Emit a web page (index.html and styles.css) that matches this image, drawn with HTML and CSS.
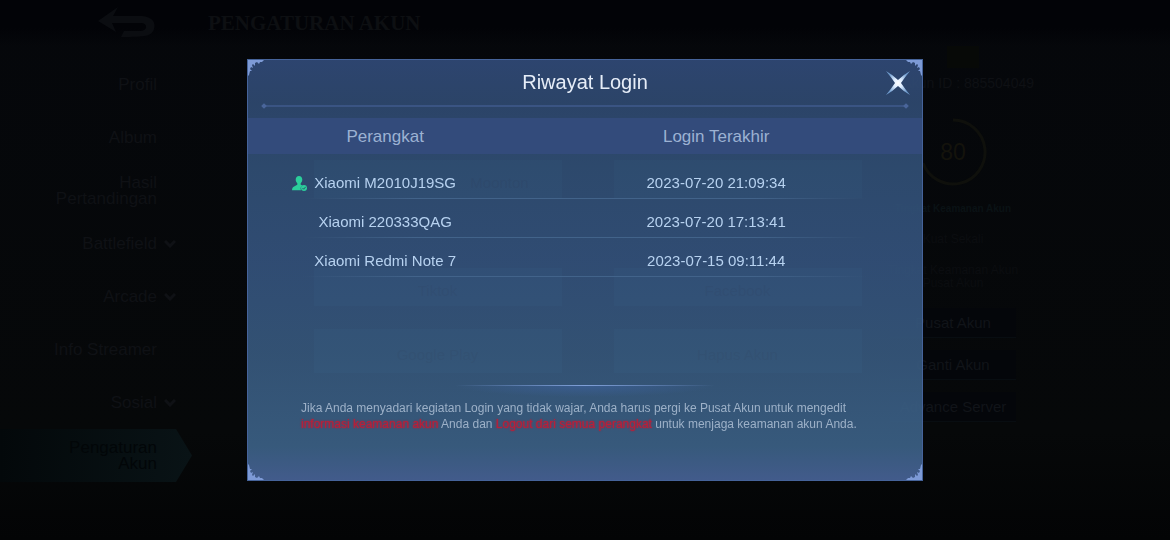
FILE: index.html
```html
<!DOCTYPE html>
<html lang="id">

<head>
    <meta charset="UTF-8">
    <meta name="viewport" content="width=device-width, initial-scale=1.0">
    <title>Pengaturan Akun</title>
    <link rel="stylesheet" href="styles.css">
</head>

<body>
    <!-- Header -->
    <header class="topbar">
        <button type="button" class="back" aria-label="Kembali">
            <svg width="58" height="32" viewBox="0 0 58 32">
                <path d="M0 14 L20 0 L15 9 H44 C54 10 58 15 56 22 C54 29 48 30 23 30 L26 24 H42 C50 24 50 16 43 16 H14 L18 25 Z" />
            </svg>
        </button>
        <h1>PENGATURAN AKUN</h1>
    </header>

    <div class="layout">
        <!-- Menu samping -->
        <nav class="sidebar">
            <a href="#">Profil</a>
            <a href="#">Album</a>
            <a href="#">Hasil<br>Pertandingan</a>
            <a href="#" class="has-sub">Battlefield <svg class="chevron" viewBox="0 0 12 8"><path d="M1 1l5 5 5-5" /></svg></a>
            <a href="#" class="has-sub">Arcade <svg class="chevron" viewBox="0 0 12 8"><path d="M1 1l5 5 5-5" /></svg></a>
            <a href="#">Info Streamer</a>
            <a href="#" class="has-sub">Sosial <svg class="chevron" viewBox="0 0 12 8"><path d="M1 1l5 5 5-5" /></svg></a>
            <a href="#" class="active">Pengaturan<br>Akun</a>
        </nav>

        <!-- Akun terhubung -->
        <main class="accounts">
            <button type="button" class="linked">Moonton</button>
            <button type="button" aria-label="VK"></button>
            <button type="button">Tiktok</button>
            <button type="button">Facebook</button>
            <button type="button" class="tall">Google Play</button>
            <button type="button" class="tall">Hapus Akun</button>
        </main>

        <!-- Panel keamanan -->
        <aside class="security">
            <div class="badge"></div>
            <p class="account-id">Akun ID : 885504049</p>
            <div class="score">
                <svg viewBox="0 0 68 68"><path d="M34 2 A32 32 0 1 1 4 45" /></svg>
                <span>80</span>
            </div>
            <p class="level">Tingkat Keamanan Akun</p>
            <p class="hint">Kuat Sekali</p>
            <p class="hint">Tingkat Keamanan Akun<br>Pusat Akun</p>
            <div class="security-actions">
                <button type="button">Pusat Akun</button>
                <button type="button">Ganti Akun</button>
                <button type="button">Advance Server</button>
            </div>
        </aside>
    </div>

    <!-- Modal riwayat login -->
    <div class="overlay">
        <section class="modal" role="dialog" aria-labelledby="modalTitle">
            <svg class="corner top-left" viewBox="0 0 16 16"><path d="M0 0H16L14 2 12 2 11 4 9 2 7 3 7 6 5 4 4 5 5 8 3 7 2 9 4 11 2 11 1 15 0 16Z" /></svg>
            <svg class="corner top-right" viewBox="0 0 16 16"><path d="M0 0H16L14 2 12 2 11 4 9 2 7 3 7 6 5 4 4 5 5 8 3 7 2 9 4 11 2 11 1 15 0 16Z" /></svg>
            <svg class="corner bottom-left" viewBox="0 0 16 16"><path d="M0 0H16L14 2 12 2 11 4 9 2 7 3 7 6 5 4 4 5 5 8 3 7 2 9 4 11 2 11 1 15 0 16Z" /></svg>
            <svg class="corner bottom-right" viewBox="0 0 16 16"><path d="M0 0H16L14 2 12 2 11 4 9 2 7 3 7 6 5 4 4 5 5 8 3 7 2 9 4 11 2 11 1 15 0 16Z" /></svg>

            <div class="modal-header">
                <h2 id="modalTitle">Riwayat Login</h2>
                <button type="button" class="close" aria-label="Tutup">
                    <svg width="26" height="26" viewBox="0 0 26 26">
                        <defs>
                            <radialGradient id="glow">
                                <stop offset="0" stop-color="#fff" />
                                <stop offset="0.4" stop-color="#dcecff" />
                                <stop offset="1" stop-color="#6f9bcd" />
                            </radialGradient>
                        </defs>
                        <path fill="url(#glow)" d="M1 1 Q8 5 13 10 Q18 5 25 1 Q20 7 16 13 Q20 19 25 25 Q18 21 13 16 Q8 21 1 25 Q6 19 10 13 Q6 7 1 1Z" />
                    </svg>
                </button>
            </div>

            <table class="history">
                <thead>
                    <tr>
                        <th scope="col">Perangkat</th>
                        <th scope="col">Login Terakhir</th>
                    </tr>
                </thead>
                <tbody>
                    <tr>
                        <td><svg class="current" viewBox="0 0 15 15"><path d="M7 0C9 0 10.300 1.500 10.300 3.700C10.300 5.200 9.500 6.500 8.700 7.200V8.800L10.500 9.600A3.800 3.800 0 0 0 9 14.300H0C0 11.500 1 10.700 3 9.900L5.300 8.800V7.200C4.500 6.500 3.700 5.200 3.700 3.700C3.700 1.500 5 0 7 0Z" /><circle cx="12" cy="12" r="3" /><path class="tick" d="M10.500 12l1.200 1.200 2-2.400" /></svg>Xiaomi M2010J19SG</td>
                        <td>2023-07-20 21:09:34</td>
                    </tr>
                    <tr>
                        <td>Xiaomi 220333QAG</td>
                        <td>2023-07-20 17:13:41</td>
                    </tr>
                    <tr>
                        <td>Xiaomi Redmi Note 7</td>
                        <td>2023-07-15 09:11:44</td>
                    </tr>
                </tbody>
            </table>

            <div class="note">
                <p>Jika Anda menyadari kegiatan Login yang tidak wajar, Anda harus pergi ke Pusat Akun untuk mengedit <strong>informasi keamanan akun</strong> Anda dan <strong>Logout dari semua perangkat</strong> untuk menjaga keamanan akun Anda.</p>
            </div>
        </section>
    </div>
</body>

</html>
```
FILE: styles.css
```css
* {
    box-sizing: border-box;
}

body {
    margin: 0;
    min-height: 100vh;
    font-family: "Liberation Sans", Arial, sans-serif;
    background: linear-gradient(#05070b, #060809 80%, #030405);
    color: #111318;
    overflow: hidden;
}

h1, h2, p {
    margin: 0;
    font-weight: normal;
}

button {
    border: none;
    padding: 0;
    background: none;
    font-family: inherit;
    color: inherit;
    cursor: pointer;
}

/* Header */
.topbar {
    display: flex;
    align-items: center;
    gap: 52px;
    height: 46px;
    padding-left: 98px;
    background: linear-gradient(#020307 60%, transparent);
}

.back svg {
    display: block;
    fill: #0b0d11;
}

.topbar h1 {
    font-family: "Liberation Serif", "Times New Roman", serif;
    font-size: 21px;
    font-weight: bold;
    color: #0d0f12;
}

.layout {
    display: grid;
    grid-template-columns: 192px 1fr 180px;
    padding-right: 127px;
}

/* Menu samping */
.sidebar {
    padding-top: 12px;
}

.sidebar a {
    display: flex;
    align-items: center;
    justify-content: flex-end;
    height: 53px;
    padding-right: 35px;
    font-size: 17px;
    line-height: 16px;
    text-align: right;
    text-decoration: none;
    color: #0f1115;
}

.sidebar .has-sub {
    gap: 7px;
    padding-right: 16px;
}

.chevron {
    width: 12px;
    height: 8px;
    fill: none;
    stroke: #0f1115;
    stroke-width: 3;
}

.sidebar .active {
    background: linear-gradient(90deg, #03080a, #091316);
    clip-path: polygon(0 0, 176px 0, 100% 50%, 176px 100%, 0 100%);
    color: #020608;
}

/* Akun terhubung */
.accounts {
    display: grid;
    grid-template-columns: 248px 248px;
    grid-template-rows: 108px 61px 44px;
    justify-content: center;
    align-content: start;
    align-items: start;
    column-gap: 52px;
    padding: 114px 0 0 120px;
}

.accounts button {
    height: 38px;
    padding-top: 6px;
    background-color: #12202a;
    font-size: 15px;
    color: #000;
}

.accounts .tall {
    height: 44px;
}

.accounts .linked {
    padding-left: 124px;
}

/* Panel keamanan */
.security {
    display: flex;
    flex-direction: column;
    align-items: center;
    text-align: center;
}

.badge {
    width: 32px;
    height: 22px;
    margin-left: 20px;
    background-color: #070907;
}

.account-id {
    align-self: flex-end;
    margin-top: 7px;
    padding-right: 9px;
    font-size: 14px;
    line-height: 16px;
    color: #0e1014;
}

.score {
    display: grid;
    place-items: center;
    margin-top: 27px;
}

.score svg,
.score span {
    grid-area: 1 / 1;
}

.score svg {
    width: 68px;
    height: 68px;
    fill: none;
    stroke: #0f100c;
    stroke-width: 3;
}

.score span {
    font-size: 23px;
    color: #14130c;
}

.level {
    margin-top: 17px;
    font-size: 10px;
    font-weight: bold;
    line-height: 12px;
    color: #0a1215;
}

.hint {
    margin-top: 18px;
    font-size: 12px;
    line-height: 13px;
    color: #0b0d10;
}

.security-actions {
    display: grid;
    gap: 12px;
    width: 126px;
    margin-top: 18px;
}

.security-actions button {
    height: 30px;
    border-bottom: 1px solid #080d11;
    background-color: #04060a;
    font-size: 15px;
    color: #111419;
}

/* Modal */
.overlay {
    position: fixed;
    inset: 0;
    display: flex;
    align-items: center;
    justify-content: center;
}

.modal {
    position: relative;
    width: 90%;
    max-width: 676px;
    border: 1px solid #45639a;
    background: linear-gradient(rgba(50, 76, 122, 0.9), rgba(48, 75, 114, 0.9) 10%, rgba(50, 81, 119, 0.9) 26%, rgba(53, 84, 126, 0.9) 48%, rgba(56, 90, 127, 0.9) 70%, rgba(61, 99, 137, 0.9) 92%, rgba(73, 101, 154, 0.9));
}

.corner {
    position: absolute;
    width: 16px;
    height: 16px;
    fill: #7d9ad6;
}

.top-left {
    top: 0;
    left: 0;
}

.top-right {
    top: 0;
    right: 0;
    transform: scaleX(-1);
}

.bottom-left {
    bottom: 0;
    left: 0;
    transform: scaleY(-1);
}

.bottom-right {
    right: 0;
    bottom: 0;
    transform: scale(-1);
}

.modal-header {
    position: relative;
    height: 47px;
    margin: 0 14px 11px;
    border-bottom: 2px solid #3a5483;
}

.modal-header::before,
.modal-header::after {
    content: "";
    position: absolute;
    bottom: -3px;
    width: 4px;
    height: 4px;
    background-color: #4a659a;
    transform: rotate(45deg);
}

.modal-header::before {
    left: 0;
}

.modal-header::after {
    right: 0;
}

.modal-header h2 {
    font-size: 20px;
    line-height: 45px;
    text-align: center;
    color: #e6edf8;
}

.close {
    position: absolute;
    top: 10px;
    right: -3px;
}

.close svg {
    display: block;
}

/* Tabel riwayat */
.history {
    width: 100%;
    border-collapse: collapse;
    table-layout: fixed;
    text-align: center;
}

.history thead {
    background-color: #334b7b;
}

.history th {
    height: 36px;
    padding: 2px 0 0;
    font-size: 17px;
    font-weight: normal;
    color: #9cb2d3;
}

.history th:first-child {
    width: 41%;
}

.history th:last-child,
.history td:last-child {
    padding-right: 14px;
}

.history td {
    padding: 14px 0 7px;
    font-size: 15px;
    line-height: 18px;
    color: #b7d2f0;
}

.history th:first-child,
.history td:first-child {
    padding-right: 2px;
}

.history tbody tr {
    background: linear-gradient(90deg, transparent, #42638a 20%, #42638a 80%, transparent) center bottom / 84% 1px no-repeat;
}

.history tbody tr:first-child td {
    padding-top: 20px;
}

.current {
    width: 15px;
    height: 15px;
    margin: 0 7px 0 -22px;
    vertical-align: -3px;
    fill: #2bcf9b;
}

.current .tick {
    fill: none;
    stroke: #2e5a72;
}

/* Catatan */
.note {
    margin-top: 108px;
    padding: 15px 53px 48px;
    background:
        linear-gradient(90deg, transparent, #7f9fd6, transparent) center top / 260px 1px no-repeat,
        radial-gradient(closest-side, rgba(64, 102, 170, 0.5), transparent) center -12px / 260px 24px no-repeat;
}

.note p {
    font-size: 12px;
    line-height: 16px;
    color: #9db1c8;
}

.note strong {
    font-weight: normal;
    color: #b8203a;
    text-shadow: 0 0 2px #c8152c;
}
```
